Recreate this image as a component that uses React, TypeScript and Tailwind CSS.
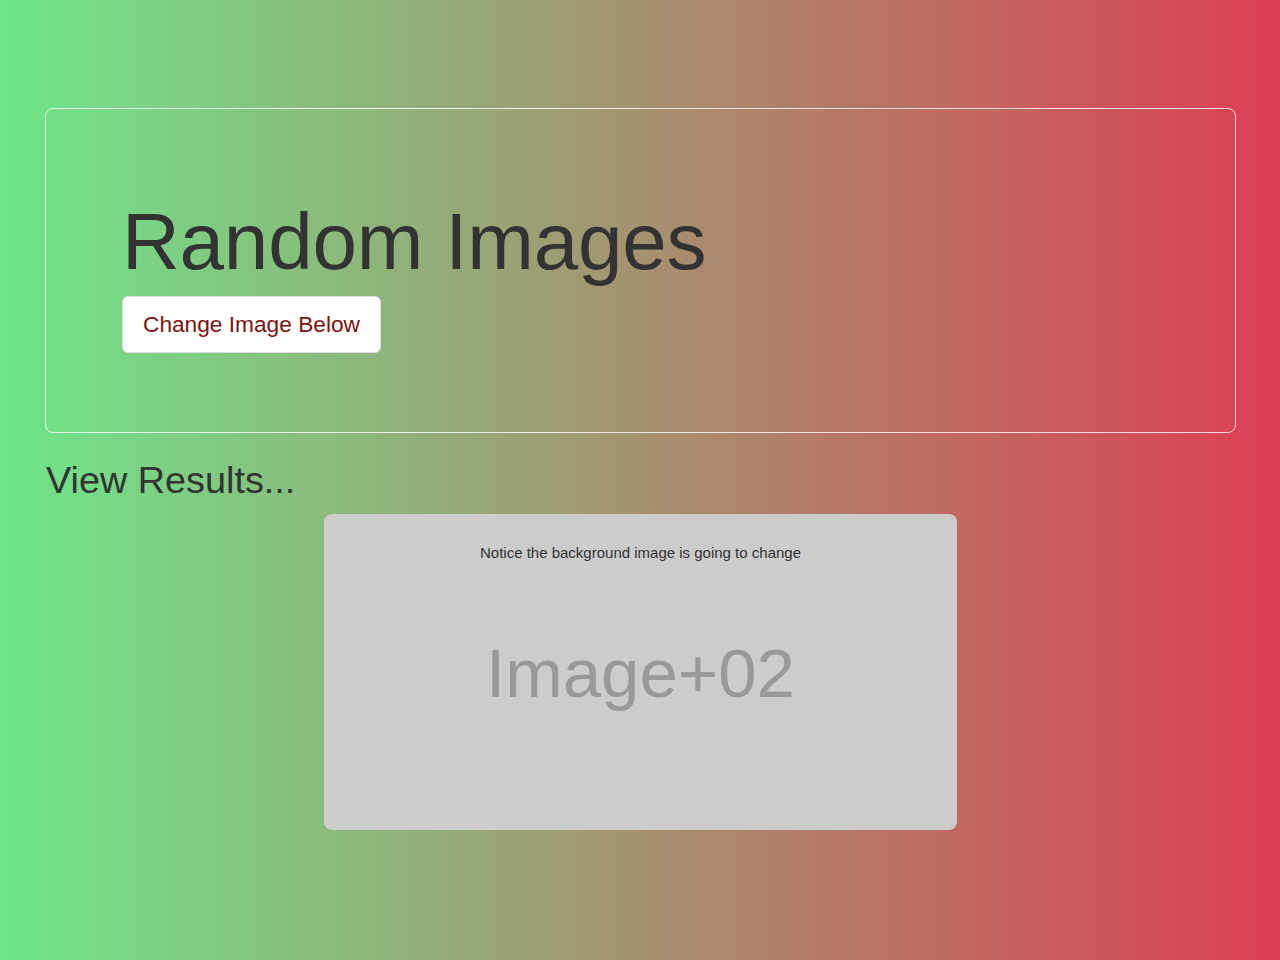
import React from "react";

export default function App() {
  return (
    <div
      className="min-h-[960px] w-full bg-[linear-gradient(to_right,#6ee68a,#dc3e55)] pl-[45px] pr-[44px] pt-[108px] text-[#333]"
      style={{ fontFamily: '"Liberation Sans", Arial, sans-serif' }}
    >
      <div className="rounded-[8px] border border-white/80 px-[76px] pt-[89px] pb-[79px]">
        <h1 className="text-[80px] leading-[88px] font-normal tracking-[-0.2px]">
          Random Images
        </h1>
        <button className="mt-[10px] h-[57px] rounded-[6px] border border-[#ddd] bg-white px-5 text-[22.7px] text-[#7f1111]">
          Change Image Below
        </button>
      </div>
      <h2 className="mt-[25px] ml-px text-[37.8px] leading-[44px] font-normal">
        View Results...
      </h2>
      <div className="mx-auto mt-[12px] flex h-[316px] w-[633px] flex-col items-center rounded-[8px] bg-[#cccccc] pt-[28px]">
        <p className="text-[15px] leading-[22.5px] text-[#333]">
          Notice the background image is going to change
        </p>
        <div className="mt-[74px] text-[69px] leading-[69px] text-[#999]">
          Image+02
        </div>
      </div>
    </div>
  );
}
